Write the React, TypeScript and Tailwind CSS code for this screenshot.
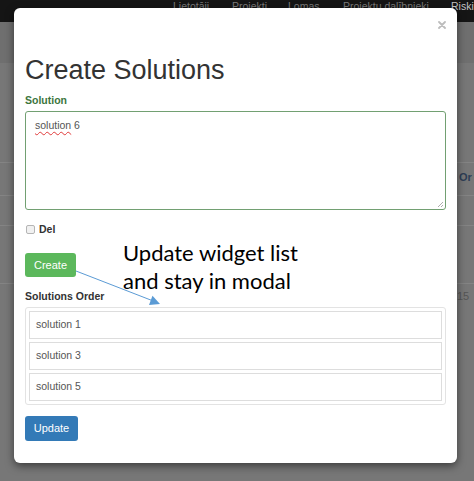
import React from 'react';

const navItems = [
  { label: 'Lietotāji', width: 'w-[59px]', color: 'text-[#7a7a7a]' },
  { label: 'Projekti', width: 'w-[56px]', color: 'text-[#7a7a7a]' },
  { label: 'Lomas', width: 'w-[55px]', color: 'text-[#7a7a7a]' },
  { label: 'Projektu dalībnieki', width: 'w-[108px]', color: 'text-[#7a7a7a]' },
  { label: 'Riski', width: 'w-[40px]', color: 'text-[#c4c4c4]' },
];

const solutions = ['solution 1', 'solution 3', 'solution 5'];

export default function App() {
  return (
    <div className="relative w-[474px] h-[481px] overflow-hidden bg-[#777777] font-['Liberation_Sans',Arial,sans-serif]">
      {/* page under the backdrop */}
      <div className="h-[22px] bg-[#151515] flex pl-[173px] text-[10.5px] leading-[12px] whitespace-nowrap">
        {navItems.map(item => (
          <span key={item.label} className={`${item.width} ${item.color} shrink-0`}>
            {item.label}
          </span>
        ))}
      </div>
      <div className="h-[41px] bg-[#6f6f6f]" />
      <div className="h-[100px] border-b border-[#848484]" />
      <div className="h-[33px] border-b border-[#848484] flex pl-[459px] pt-[6px]">
        <span className="text-[11px] font-bold text-[#2d3e55]">Or</span>
      </div>
      <div className="h-[30px] border-b border-[#848484]" />
      <div className="h-[58px] border-b border-[#848484]" />
      <div className="h-[24px] flex pl-[457px] items-center">
        <span className="text-[11px] text-[#555555]">15</span>
      </div>

      {/* modal */}
      <div className="absolute left-[14px] top-[8px] w-[443px] h-[455px] bg-white rounded-[6px] shadow-[0_3px_9px_rgba(0,0,0,0.5)] px-[11px] pt-[47px] text-[#333333]">
        <svg className="absolute left-[424px] top-[13px]" width="8" height="8" viewBox="0 0 8 8">
          <path d="M1 1 L7 7 M7 1 L1 7" stroke="#bdbdbd" strokeWidth="1.8" strokeLinecap="round" />
        </svg>

        <h1 className="text-[27px] leading-[30px] font-normal">Create Solutions</h1>

        <div className="mt-[8px] text-[10.5px] leading-[15px] font-bold text-[#3c763d]">Solution</div>
        <div className="relative mt-[3px] h-[99px] border border-[#72a072] rounded-[3px] px-[9px] pt-[5px] text-[10.5px] leading-[16px] text-[#555555]">
          <span className="underline decoration-wavy decoration-[#e03a3a] decoration-1 underline-offset-[2px]">solution</span> 6
          <svg className="absolute right-[1px] bottom-[1px]" width="7" height="7" viewBox="0 0 7 7">
            <path d="M6 1 L1 6 M6 4 L4 6" stroke="#999999" strokeWidth="0.8" />
          </svg>
        </div>

        <div className="mt-[12px] h-[15px] flex items-center gap-[4px] pl-[1px]">
          <div className="w-[9px] h-[9px] rounded-[2px] border border-[#b5b5b5] bg-[#f1f1f1]" />
          <span className="text-[10.5px] font-bold">Del</span>
        </div>

        <button className="mt-[16px] block h-[24px] w-[51px] rounded-[3px] bg-[#5cb85c] text-white text-[11px]">
          Create
        </button>

        <div className="mt-[12px] text-[10.5px] leading-[15px] font-bold">Solutions Order</div>
        <div className="mt-[3px] border border-[#e3e3e3] rounded-[3px] p-[3px] flex flex-col gap-[3px]">
          {solutions.map(s => (
            <div key={s} className="h-[28px] border border-[#dddddd] px-[6px] flex items-center text-[10.5px] text-[#555555]">
              {s}
            </div>
          ))}
        </div>

        <button className="mt-[11px] block h-[25px] w-[53px] rounded-[3px] bg-[#337ab7] text-white text-[11px]">
          Update
        </button>
      </div>

      {/* annotation */}
      <div className="absolute left-[123px] top-[239px] font-['Lato',sans-serif] text-[22px] leading-[28px] text-black">
        <div>Update widget list</div>
        <div>and stay in modal</div>
      </div>
      <svg className="absolute left-0 top-0 pointer-events-none" width="474" height="481">
        <line x1="76" y1="271" x2="152" y2="300.5" stroke="#5b9bd5" strokeWidth="1" />
        <polygon points="160,304 149,305 152.5,295.7" fill="#5b9bd5" />
      </svg>
    </div>
  );
}
